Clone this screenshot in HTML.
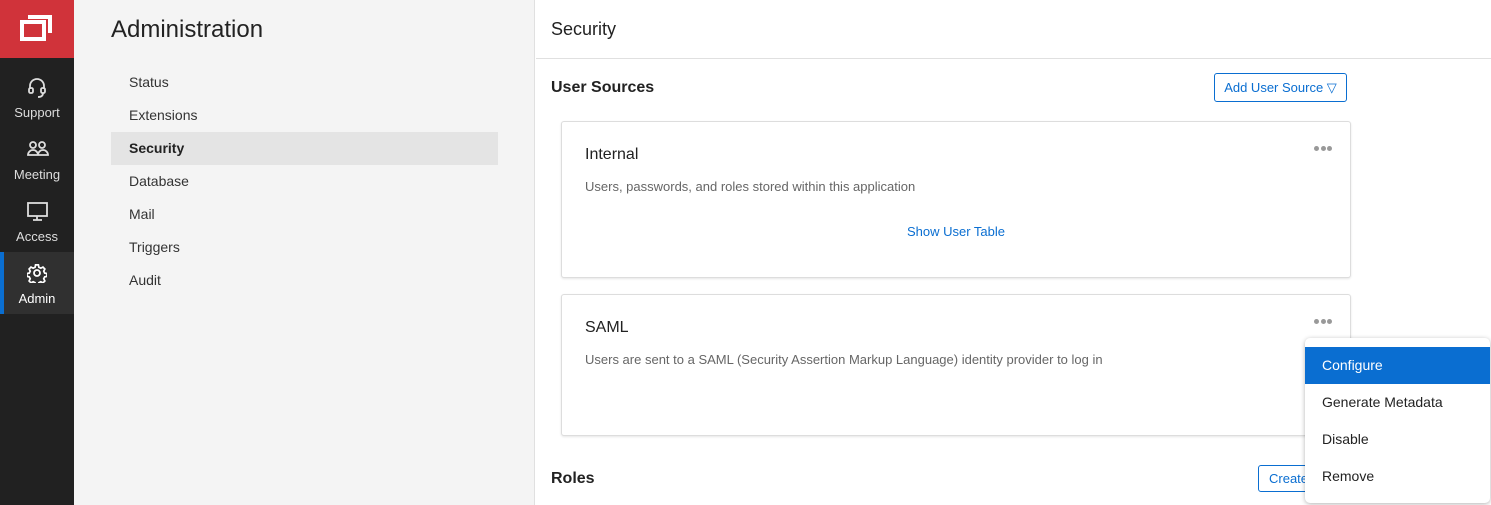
<!DOCTYPE html>
<html><head><style>
*{box-sizing:border-box;margin:0;padding:0}
body{width:1491px;height:505px;overflow:hidden;font-family:"Liberation Sans",sans-serif;background:#fff;position:relative}
.side{position:absolute;left:0;top:0;width:74px;height:505px;background:#212121}
.logo{position:absolute;left:0;top:0;width:74px;height:58px;background:#d0333a}
.nav{position:absolute;left:0;width:74px;height:62px;color:#ddd;font-size:13px;text-align:center}
.nav span{position:absolute;left:0;right:0;top:39px}
.nav svg{position:absolute;left:27px;top:11px}
.mid{position:absolute;left:74px;top:0;width:461px;height:505px;background:#f4f4f4;border-right:1px solid #e0e0e0}
.mid h1{position:absolute;left:37px;top:16px;font-size:24px;font-weight:normal;color:#222}
.item{position:absolute;left:37px;width:387px;height:33px;padding-left:18px;line-height:33px;font-size:14px;color:#333}
.main{position:absolute;left:536px;top:0;right:0;height:505px}
.card{position:absolute;left:25px;width:790px;background:#fff;border:1px solid #ddd;border-radius:3px;box-shadow:0 1px 2px rgba(0,0,0,.1)}
.card h3{position:absolute;left:23px;top:24px;font-size:16px;font-weight:normal;color:#222}
.card p{position:absolute;left:23px;top:57px;font-size:13px;color:#666}
.dots{position:absolute;right:18px;top:24px;width:18px;height:5px;display:flex;gap:1.5px}
.dots i{flex:none;width:5px;height:5px;border-radius:50%;background:#999}
.btn{position:absolute;border:1px solid #0a6ed1;border-radius:3px;color:#0a6ed1;font-size:13px;background:#fff}
.menu{position:absolute;left:1305px;top:338px;width:185px;height:165px;background:#fff;border-radius:5px;box-shadow:0 1px 5px rgba(0,0,0,.3)}
.mi{position:absolute;left:0;width:185px;height:37px;line-height:37px;padding-left:17px;font-size:14px;color:#222}
</style></head><body>
<div class="side">
<div class="logo"><svg width="74" height="58"><rect x="22" y="22" width="22" height="17" fill="none" stroke="#fff" stroke-width="4"/><path d="M28 17H50V33" fill="none" stroke="#fff" stroke-width="4"/></svg></div>
<div class="nav" style="top:66px"><svg width="20" height="22" fill="none" stroke="#ddd" stroke-width="1.8"><path d="M3 12V9a7 7 0 0114 0v3"/><rect x="2" y="11" width="4" height="5" rx="1.5"/><rect x="14" y="11" width="4" height="5" rx="1.5"/><path d="M16 16q0 4-5 4"/></svg><span>Support</span></div>
<div class="nav" style="top:128px"><svg width="22" height="20" fill="none" stroke="#ddd" stroke-width="1.8"><circle cx="6" cy="6" r="3"/><circle cx="15" cy="6" r="3"/><path d="M1 16a5 5 0 0110 0zM11 16a5 5 0 0110 0z"/></svg><span>Meeting</span></div>
<div class="nav" style="top:190px"><svg width="22" height="22" fill="none" stroke="#ddd" stroke-width="1.8"><rect x="1" y="2" width="19" height="13"/><path d="M10 15v4M6 19h9"/></svg><span>Access</span></div>
<div class="nav" style="top:252px;background:#303030;color:#fff"><div style="position:absolute;left:0;top:0;width:4px;height:62px;background:#0a6ed1"></div><svg width="20" height="20" fill="none" stroke="#fff" stroke-width="1.8"><circle cx="10" cy="10" r="3"/><path d="M8.5 1.5h3l.5 2.5 2 1 2.3-1.2 2 2-1.2 2.3 1 2 2.4.5v3l-2.4.5-1 2 1.2 2.3-2 2-2.3-1.2-2 1-.5 2.5h-3l-.5-2.5-2-1-2.3 1.2-2-2 1.2-2.3-1-2-2.4-.5v-3l2.4-.5 1-2-1.2-2.3 2-2 2.3 1.2 2-1z" transform="scale(.95) translate(.5 .5)"/></svg><span>Admin</span></div>
</div>
<div class="mid">
<h1>Administration</h1>
<div class="item" style="top:66px">Status</div>
<div class="item" style="top:99px">Extensions</div>
<div class="item" style="top:132px;background:#e4e4e4;font-weight:bold;color:#222">Security</div>
<div class="item" style="top:165px">Database</div>
<div class="item" style="top:198px">Mail</div>
<div class="item" style="top:231px">Triggers</div>
<div class="item" style="top:264px">Audit</div>
</div>
<div class="main">
<div style="position:absolute;left:15px;top:19px;font-size:18px;color:#222">Security</div>
<div style="position:absolute;left:0;right:0;top:58px;border-top:1px solid #e0e0e0"></div>
<div style="position:absolute;left:15px;top:79px;font-size:16px;font-weight:bold;color:#222">User Sources</div>
<div class="btn" style="left:678px;top:73px;width:133px;height:29px;line-height:27px;text-align:center">Add User Source ▽</div>
<div class="card" style="top:121px;height:157px"><h3>Internal</h3><div class="dots"><i></i><i></i><i></i></div><p>Users, passwords, and roles stored within this application</p><div style="position:absolute;left:0;right:0;top:102px;text-align:center;font-size:13px;color:#0a6ed1">Show User Table</div></div>
<div class="card" style="top:294px;height:142px"><h3>SAML</h3><div class="dots"><i></i><i></i><i></i></div><p>Users are sent to a SAML (Security Assertion Markup Language) identity provider to log in</p></div>
<div style="position:absolute;left:15px;top:470px;font-size:16px;font-weight:bold;color:#222">Roles</div>
<div class="btn" style="left:722px;top:465px;width:80px;height:27px;line-height:25px;padding-left:10px">Create</div>
</div>
<div class="menu">
<div class="mi" style="top:9px;background:#0a6ed1;color:#fff">Configure</div>
<div class="mi" style="top:46px">Generate Metadata</div>
<div class="mi" style="top:83px">Disable</div>
<div class="mi" style="top:120px">Remove</div>
</div>
</body></html>
